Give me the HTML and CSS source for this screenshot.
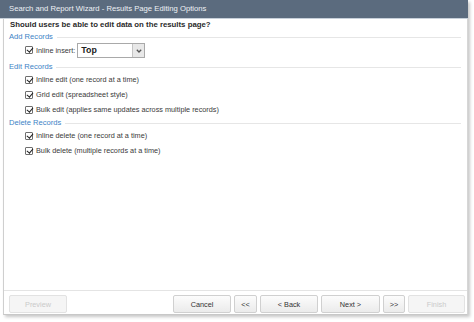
FILE: index.html
```html
<!DOCTYPE html>
<html>
<head>
<meta charset="utf-8">
<link rel="stylesheet" href="styles.css">
</head>
<body>
<div class="dialog">
  <div class="titlebar">Search and Report Wizard - Results Page Editing Options</div>
  <div class="content">
    <div class="question">Should users be able to edit data on the results page?</div>
    <div class="section">
      <div class="heading h-add"><span>Add Records</span></div>
      <div class="row row-insert"><span class="cb"></span><span class="lbl">Inline insert:</span>
        <span class="select"><span class="sel-text">Top</span><span class="sel-btn"><svg width="6" height="4" viewBox="0 0 6 4"><path d="M0.8 0.8 L3 3 L5.2 0.8" fill="none" stroke="#555" stroke-width="1.3"/></svg></span></span>
      </div>
    </div>
    <div class="section">
      <div class="heading"><span>Edit Records</span></div>
      <div class="row"><span class="cb"></span><span class="lbl">Inline edit (one record at a time)</span></div>
      <div class="row"><span class="cb"></span><span class="lbl">Grid edit (spreadsheet style)</span></div>
      <div class="row"><span class="cb"></span><span class="lbl">Bulk edit (applies same updates across multiple records)</span></div>
    </div>
    <div class="section">
      <div class="heading h-del"><span>Delete Records</span></div>
      <div class="row"><span class="cb"></span><span class="lbl">Inline delete (one record at a time)</span></div>
      <div class="row"><span class="cb"></span><span class="lbl">Bulk delete (multiple records at a time)</span></div>
    </div>
  </div>
  <div class="footer">
    <button class="btn w58 disabled">Preview</button>
    <div class="spacer"></div>
    <button class="btn w58">Cancel</button>
    <button class="btn w23">&lt;&lt;</button>
    <button class="btn w58">&lt; Back</button>
    <button class="btn w59">Next &gt;</button>
    <button class="btn w22">&gt;&gt;</button>
    <button class="btn w57 disabled">Finish</button>
  </div>
</div>
</body>
</html>
```
FILE: styles.css
```css
html, body { margin: 0; padding: 0; background: #fff; }
body { font-family: "Liberation Sans", Arial, sans-serif; width: 474px; height: 322px; overflow: hidden; }
.dialog {
  margin-left: 3px;
  width: 465px;
  height: 315px;
  border-left: 1px solid #cfcfcf;
  border-right: 1px solid #d6d6d6;
  border-bottom: 1px solid #c8c8c8;
  box-shadow: 2px 2px 3px rgba(0,0,0,0.22);
  display: flex;
  flex-direction: column;
  box-sizing: border-box;
  background: #fff;
}
.titlebar {
  height: 18px;
  margin-left: -4px;
  margin-right: -1px;
  background: #5b6b7e;
  color: #eef1f5;
  font-size: 7.7px;
  line-height: 18px;
  padding-left: 9px;
  border-bottom: 1px solid #c7d0da;
}
.content { flex: 1; padding: 0 6px 0 5px; }
.question { font-weight: bold; font-size: 7.8px; color: #2a2a2a; line-height: 11px; padding-left: 1px; }
.heading { display: flex; align-items: center; font-size: 7.6px; color: #3d83c6; height: 12px; }
.h-add { height: 13px; }
.h-del { height: 11px; }
.heading::after { content: ""; flex: 1; border-top: 1px solid #e6e6e6; margin-left: 4px; margin-top: 2px; }
.row { display: flex; align-items: center; height: 15px; padding-left: 16px; font-size: 7.3px; color: #3a3a3a; }
.row-insert { height: 17px; align-items: flex-start; }
.row-insert .cb { margin-top: 3px; }
.row-insert .lbl { line-height: 15px; }
.cb {
  width: 8px; height: 8px; border: 1px solid #6f6f6f; background: #fff; box-sizing: border-box; position: relative; margin-right: 3px; border-radius: 1px;
}
.cb::after {
  content: ""; position: absolute; left: 2px; top: -1px; width: 2.5px; height: 5px;
  border-right: 1.5px solid #222; border-bottom: 1.5px solid #222; transform: rotate(40deg);
}
.select {
  display: inline-flex; margin-left: 2px; width: 68px; height: 15px; border: 1px solid #a9a9a9; box-sizing: border-box; background: #fff;
}
.sel-text { flex: 1; font-size: 8.8px; font-weight: bold; color: #222; padding-left: 3px; line-height: 13px; }
.sel-btn { width: 11px; background: #e8e8e8; border-left: 1px solid #c4c4c4; display: flex; align-items: center; justify-content: center; }
.footer {
  height: 24px;
  border-top: 1px solid #e4e4e4;
  display: flex;
  align-items: flex-start;
  gap: 3px;
  padding: 4px 2px 0 5px;
  box-sizing: border-box;
}
.spacer { flex: 1; }
.btn {
  height: 18px; font-family: "Liberation Sans", Arial, sans-serif; font-size: 7.3px; color: #333;
  border: 1px solid #d0d0d0; border-radius: 2px; background: linear-gradient(#fcfcfc, #ebebeb); padding: 0;
}
.btn.disabled { color: #cacaca; background: #f5f5f5; border-color: #e2e2e2; }
.w57 { width: 57px; }
.w58 { width: 58px; }
.w59 { width: 59px; }
.w22 { width: 22px; }
.w23 { width: 23px; }
```
